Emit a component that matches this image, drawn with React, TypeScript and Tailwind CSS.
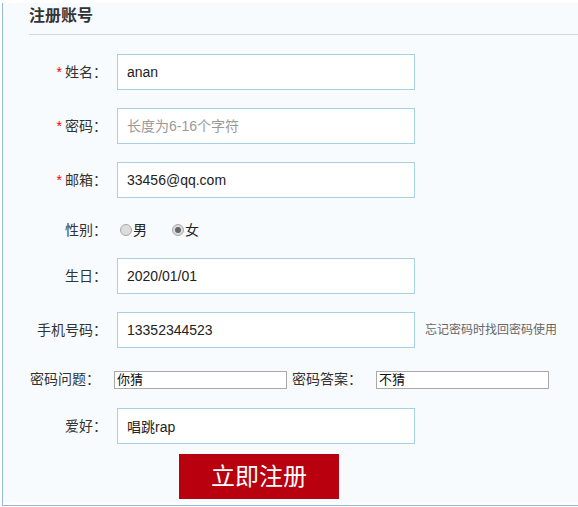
import React from "react"

const font = { fontFamily: '"Liberation Sans", "Noto Sans CJK SC", sans-serif' }

function Label({ text, required }: { text: string; required?: boolean }) {
  return (
    <div className="w-[104px] shrink-0 text-right text-[14px] text-[#333]">
      {required && <span className="mr-[3px] text-[#f00]">*</span>}
      {text}
    </div>
  )
}

function Field({
  label,
  required,
  value,
  placeholder,
  hint,
}: {
  label: string
  required?: boolean
  value?: string
  placeholder?: string
  hint?: string
}) {
  return (
    <div className="flex h-[36px] items-center">
      <Label text={label} required={required} />
      <input
        defaultValue={value}
        placeholder={placeholder}
        className="ml-[10px] h-[36px] w-[298px] border border-[#a6d0e3] bg-white pl-[9px] text-[14px] text-[#222] outline-none placeholder:text-[#999]"
      />
      {hint && <span className="ml-[10px] text-[12px] text-[#666]">{hint}</span>}
    </div>
  )
}

function Radio({ label, checked }: { label: string; checked?: boolean }) {
  return (
    <label className="flex items-center text-[14px] text-[#222]">
      <span className="flex h-[12px] w-[12px] items-center justify-center rounded-full border border-[#a8a8a8] bg-[#dcdcdc]">
        {checked && <span className="h-[6px] w-[6px] rounded-full bg-[#666]" />}
      </span>
      <span className="ml-[1px]">{label}</span>
    </label>
  )
}

export default function App() {
  return (
    <div className="h-[507px] w-[578px] overflow-hidden bg-white" style={font}>
      <div className="ml-[2px] h-[503px] border-b border-l border-[#93b8d8]">
        <div className="mt-[3px] h-[499px] bg-[#f7fbfe] pt-[3px]">
          <div className="ml-[26px] border-b border-[#d3d7da] pb-[8px]">
            <h3 className="text-[16px] font-bold leading-[20px] text-[#333]">注册账号</h3>
          </div>

          <div className="flex flex-col gap-[18px] pt-[19px]">
            <Field label="姓名：" required value="anan" />
            <Field label="密码：" required placeholder="长度为6-16个字符" />
            <Field label="邮箱：" required value="33456@qq.com" />

            <div className="flex h-[24px] items-center pt-[4px]">
              <Label text="性别：" />
              <div className="ml-[13px] flex items-center gap-[25px]">
                <Radio label="男" />
                <Radio label="女" checked />
              </div>
            </div>

            <Field label="生日：" value="2020/01/01" />
            <Field label="手机号码：" value="13352344523" hint="忘记密码时找回密码使用" />

            <div className="flex h-[24px] items-center pl-[27px] pt-[3px] text-[14px] text-[#333]">
              <span>密码问题：</span>
              <input
                defaultValue="你猜"
                className="ml-[14px] h-[18px] w-[173px] border border-[#a9a9a9] bg-white px-[2px] text-[13px] text-[#111] outline-none"
              />
              <span className="ml-[5px]">密码答案：</span>
              <input
                defaultValue="不猜"
                className="ml-[14px] h-[18px] w-[173px] border border-[#a9a9a9] bg-white px-[2px] text-[13px] text-[#111] outline-none"
              />
            </div>

            <Field label="爱好：" value="唱跳rap" />
          </div>

          <button className="ml-[176px] mt-[10px] h-[45px] w-[160px] bg-[#b8000e] text-[24px] text-white">
            立即注册
          </button>
        </div>
      </div>
    </div>
  )
}
